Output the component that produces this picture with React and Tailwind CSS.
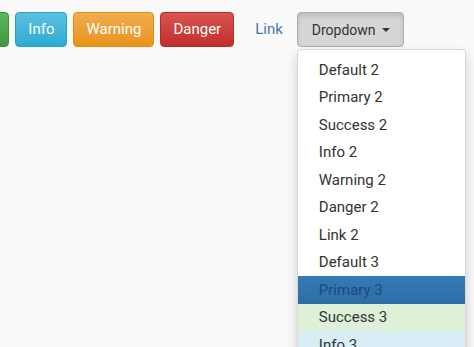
import React from 'react';

const btn = 'h-[35px] px-[12px] rounded-[4px] border leading-none flex items-center shrink-0';

export default function App() {
  const items = [
    { label: 'Default 2' },
    { label: 'Primary 2' },
    { label: 'Success 2' },
    { label: 'Info 2' },
    { label: 'Warning 2' },
    { label: 'Danger 2' },
    { label: 'Link 2' },
    { label: 'Default 3' },
    { label: 'Primary 3', cls: 'bg-gradient-to-b from-[#337ab7] to-[#2e6da4] text-[#1f4a78]' },
    { label: 'Success 3', cls: 'bg-[#dff0d8] text-[#333]' },
    { label: 'Info 3', cls: 'bg-[#d9edf7] text-[#333]' },
    { label: 'Warning 3', cls: 'bg-[#fcf8e3] text-[#333]' },
  ];

  return (
    <div className="h-[347px] w-[474px] overflow-hidden bg-[#f9f9f9] font-['Roboto',sans-serif]">
      <div className="flex items-start gap-[6px] pt-[12px] ml-[-73px]">
        <button className={`${btn} text-[15px] text-white border-[#3e8f3e] bg-gradient-to-b from-[#5cb85c] to-[#419641]`}>
          Success
        </button>
        <button className={`${btn} text-[15px] text-white border-[#28a4c9] bg-gradient-to-b from-[#5bc0de] to-[#2aabd2]`}>
          Info
        </button>
        <button className={`${btn} text-[15px] text-white border-[#e38d13] bg-gradient-to-b from-[#f0ad4e] to-[#eb9316]`}>
          Warning
        </button>
        <button className={`${btn} text-[15px] text-white border-[#b92c28] bg-gradient-to-b from-[#d9534f] to-[#c12e2a]`}>
          Danger
        </button>
        <button className={`${btn} text-[15px] text-[#4a78a8] border-transparent px-[14px] mr-[-7px]`}>
          Link
        </button>
        <div className="relative">
          <button className={`${btn} text-[14px] text-[#333] border-[#adadad] bg-[#d6d6d6] shadow-[inset_0_3px_5px_rgba(0,0,0,0.125)] pl-[14px] pr-[13px] gap-[6px]`}>
            Dropdown
            <span className="w-0 h-0 border-l-[4px] border-r-[4px] border-t-[4px] border-l-transparent border-r-transparent border-t-[#333]" />
          </button>
          <div className="absolute left-0 top-[37px] w-[169px] bg-white border border-[rgba(0,0,0,0.15)] rounded-[4px] shadow-[0_6px_12px_rgba(0,0,0,0.175)] py-[6px]">
            {items.map((it) => (
              <div
                key={it.label}
                className={`h-[27.5px] pl-[21px] flex items-center text-[15px] ${it.cls || 'text-[#333]'}`}
              >
                {it.label}
              </div>
            ))}
          </div>
        </div>
      </div>
    </div>
  );
}
